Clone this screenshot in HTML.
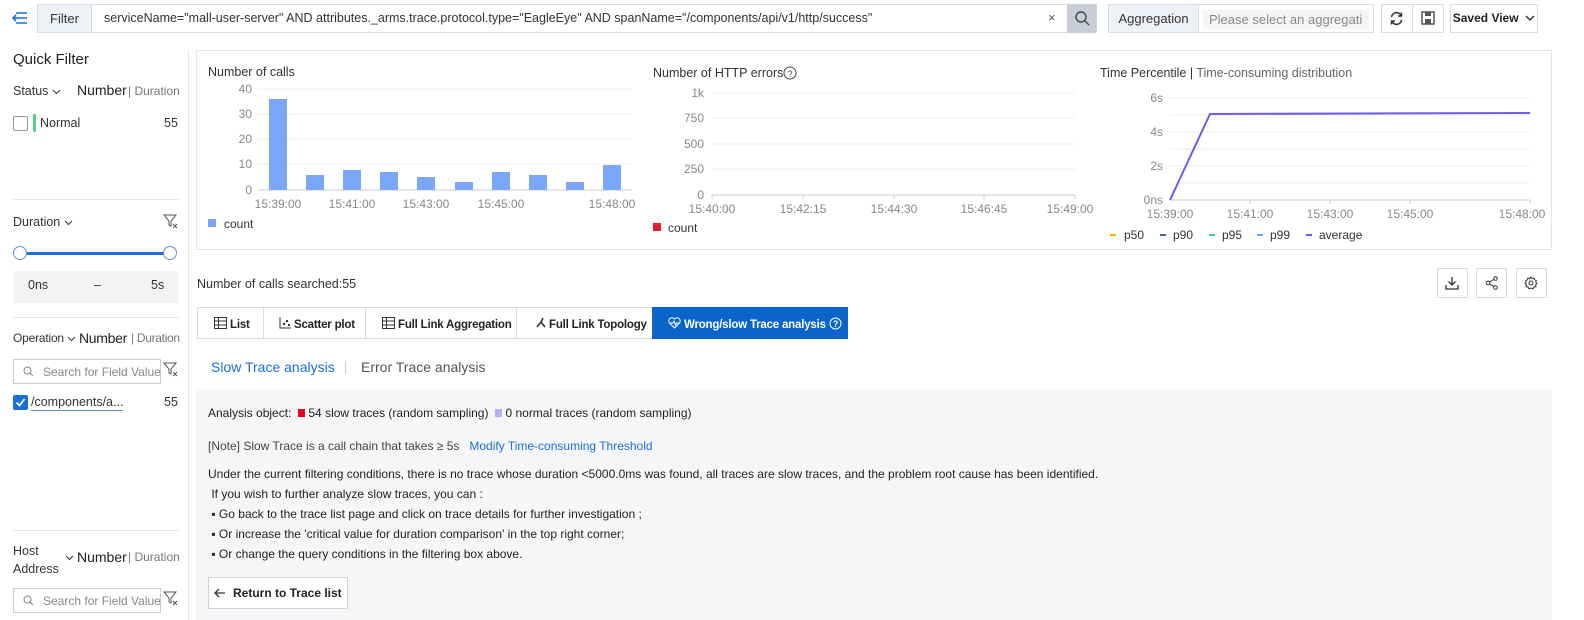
<!DOCTYPE html>
<html><head><meta charset="utf-8"><style>
*{box-sizing:border-box;margin:0;padding:0}
body{width:1584px;height:620px;overflow:hidden;background:#fff;font-family:"Liberation Sans",sans-serif;color:#333;font-size:12px;position:relative}
.a{position:absolute;white-space:nowrap}
.bx{position:absolute;border:1px solid #d9dde3;background:#fff}
.tb{font-size:11.5px;font-weight:bold;color:#222;letter-spacing:-0.2px}
</style></head><body>
<!-- top bar -->
<svg class="a" style="left:12px;top:11px" width="16" height="14" viewBox="0 0 16 14"><path d="M4 2H15M1 7H15M4 12H15M4 4L1 7L4 10" stroke="#1a6fd8" stroke-width="1.6" fill="none"/></svg>
<div class="bx" style="left:37px;top:4px;width:55px;height:29px;background:#eef1f6;text-align:center;line-height:27px;font-size:13px">Filter</div>
<div class="bx" style="left:91px;top:4px;width:977px;height:29px;line-height:27px;padding-left:12px;font-size:12.5px">serviceName="mall-user-server" AND attributes._arms.trace.protocol.type="EagleEye" AND spanName="/components/api/v1/http/success"</div>
<div class="a" style="left:1048px;top:10px;font-size:13px;color:#555">×</div>
<div class="a" style="left:1067px;top:4px;width:30px;height:29px;background:#c9ced6;border-radius:0 2px 2px 0"></div>
<svg class="a" style="left:1075px;top:11px" width="15" height="15"><circle cx="6" cy="6" r="5" stroke="#444" stroke-width="1.4" fill="none"/><path d="M10 10L14 14" stroke="#444" stroke-width="1.4"/></svg>
<div class="bx" style="left:1108px;top:4px;width:91px;height:29px;background:#eef1f6;text-align:center;line-height:27px;font-size:13px">Aggregation</div>
<div class="bx" style="left:1198px;top:4px;width:176px;height:29px;padding:5px 4px"><div style="background:#f4f5f7;height:19px;line-height:19px;padding-left:6px;color:#888;font-size:13px">Please select an aggregati</div></div>
<div class="bx" style="left:1381px;top:4px;width:63px;height:29px"></div>
<div class="a" style="left:1412px;top:4px;width:1px;height:29px;background:#d9dde3"></div>
<svg class="a" style="left:1389px;top:11px" width="15" height="15" viewBox="0 0 15 15"><path d="M2.5 6A5 5 0 0 1 12 4.5M12.5 9A5 5 0 0 1 3 10.5" stroke="#333" stroke-width="1.6" fill="none"/><path d="M12.5 1.5V5H9M2.5 13.5V10H6" stroke="#333" stroke-width="1.4" fill="none"/></svg>
<svg class="a" style="left:1421px;top:11px" width="14" height="14"><rect x="1" y="1" width="12" height="12" stroke="#555" stroke-width="1.5" fill="none"/><rect x="4" y="1" width="6" height="4" fill="#555"/><rect x="4" y="8" width="6" height="5" fill="#555"/></svg>
<div class="bx" style="left:1450px;top:4px;width:88px;height:29px;text-align:center;line-height:27px;font-size:12px;font-weight:bold;color:#222">Saved View &nbsp;<svg width="10" height="7"><path d="M1 1L5 5L9 1" stroke="#333" stroke-width="1.4" fill="none"/></svg></div>

<!-- sidebar -->
<div class="a" style="left:188px;top:50px;width:1px;height:570px;background:#e5e7eb"></div>
<div class="a" style="left:13px;top:51px;font-size:15px;color:#222">Quick Filter</div>
<div class="a" style="left:13px;top:84px;font-size:12.5px">Status <svg width="9" height="6"><path d="M1 1L4.5 4.5L8 1" stroke="#333" fill="none"/></svg></div>
<div class="a" style="left:77px;top:82px;font-size:14px;color:#222">Number</div>
<div class="a" style="left:128px;top:84px;font-size:12px;color:#777">| Duration</div>
<div class="a" style="left:13px;top:116px;width:15px;height:15px;border:1px solid #999;border-radius:2px"></div>
<div class="a" style="left:33px;top:114px;width:3px;height:18px;background:#4cd08a;border-radius:2px"></div>
<div class="a" style="left:40px;top:116px;font-size:12.5px">Normal</div>
<div class="a" style="left:164px;top:116px;font-size:12.5px">55</div>
<div class="a" style="left:13px;top:199px;width:166px;height:1px;background:#e3e5e8"></div>
<div class="a" style="left:13px;top:215px;font-size:12.5px">Duration <svg width="9" height="6"><path d="M1 1L4.5 4.5L8 1" stroke="#333" fill="none"/></svg></div>
<svg class="a" style="left:163px;top:213px" width="16" height="16"><path d="M1 2H13L8 8V13L6 12V8Z" stroke="#555" fill="none"/><path d="M10 11L14 15M14 11L10 15" stroke="#555"/></svg>
<div class="a" style="left:20px;top:252px;width:150px;height:3px;background:#1a6fd8"></div>
<div class="a" style="left:13px;top:246px;width:14px;height:14px;border:1.5px solid #6a8fc7;border-radius:50%;background:#fff"></div>
<div class="a" style="left:163px;top:246px;width:14px;height:14px;border:1.5px solid #6a8fc7;border-radius:50%;background:#fff"></div>
<div class="a" style="left:13px;top:271px;width:166px;height:32px;background:#f2f3f5"></div>
<div class="a" style="left:28px;top:278px;font-size:12.5px">0ns</div>
<div class="a" style="left:94px;top:278px;font-size:12.5px">–</div>
<div class="a" style="left:151px;top:278px;font-size:12.5px">5s</div>
<div class="a" style="left:13px;top:317px;width:166px;height:1px;background:#e3e5e8"></div>
<div class="a" style="left:13px;top:331px;font-size:12px;letter-spacing:-0.2px">Operation <svg width="9" height="6"><path d="M1 1L4.5 4.5L8 1" stroke="#333" fill="none"/></svg></div>
<div class="a" style="left:79px;top:330px;font-size:14px;color:#222;letter-spacing:-0.3px">Number</div>
<div class="a" style="left:131px;top:331px;font-size:12px;color:#777;letter-spacing:-0.3px">| Duration</div>
<div class="bx" style="left:13px;top:359px;width:148px;height:25px;border-color:#ccc"></div>
<svg class="a" style="left:23px;top:366px" width="11" height="11"><circle cx="4.5" cy="4.5" r="3.5" stroke="#888" fill="none"/><path d="M7 7L10 10" stroke="#888"/></svg>
<div class="a" style="left:43px;top:365px;font-size:12px;color:#888">Search for Field Value</div>
<svg class="a" style="left:163px;top:361px" width="16" height="16"><path d="M1 2H13L8 8V13L6 12V8Z" stroke="#555" fill="none"/><path d="M10 11L14 15M14 11L10 15" stroke="#555"/></svg>
<div class="a" style="left:13px;top:395px;width:15px;height:15px;background:#1a6fd8;border-radius:2px"></div>
<svg class="a" style="left:15px;top:397px" width="11" height="11"><path d="M1.5 5.5L4.5 8.5L9.5 2" stroke="#fff" stroke-width="1.8" fill="none"/></svg>
<div class="a" style="left:31px;top:395px;font-size:12.5px;border-bottom:1px solid #6a8fd8;padding-bottom:1px">/components/a...</div>
<div class="a" style="left:164px;top:395px;font-size:12.5px">55</div>
<div class="a" style="left:13px;top:530px;width:166px;height:1px;background:#e3e5e8"></div>
<div class="a" style="left:13px;top:542px;font-size:12.5px;line-height:18px">Host<br>Address</div>
<div class="a" style="left:65px;top:550px;font-size:12.5px"><svg width="9" height="6"><path d="M1 1L4.5 4.5L8 1" stroke="#333" fill="none"/></svg></div>
<div class="a" style="left:77px;top:549px;font-size:14px;color:#222">Number</div>
<div class="a" style="left:128px;top:550px;font-size:12px;color:#777">| Duration</div>
<div class="bx" style="left:13px;top:588px;width:148px;height:25px;border-color:#ccc"></div>
<svg class="a" style="left:23px;top:595px" width="11" height="11"><circle cx="4.5" cy="4.5" r="3.5" stroke="#888" fill="none"/><path d="M7 7L10 10" stroke="#888"/></svg>
<div class="a" style="left:43px;top:594px;font-size:12px;color:#888">Search for Field Value</div>
<svg class="a" style="left:163px;top:590px" width="16" height="16"><path d="M1 2H13L8 8V13L6 12V8Z" stroke="#555" fill="none"/><path d="M10 11L14 15M14 11L10 15" stroke="#555"/></svg>

<!-- charts -->
<div class="bx" style="left:196px;top:50px;width:1356px;height:200px;border-color:#e3e5e8"></div>
<svg class="a" style="left:0;top:0" width="1584" height="260" font-family="Liberation Sans" font-size="12">
<text x="208" y="76" fill="#333" font-size="12.5">Number of calls</text>
<g stroke="#eee"><line x1="258" y1="89" x2="632" y2="89"/><line x1="258" y1="114" x2="632" y2="114"/><line x1="258" y1="139" x2="632" y2="139"/><line x1="258" y1="164" x2="632" y2="164"/></g>
<line x1="258" y1="190" x2="632" y2="190" stroke="#ccc"/>
<g fill="#888" text-anchor="end"><text x="252" y="93">40</text><text x="252" y="118">30</text><text x="252" y="143">20</text><text x="252" y="168">10</text><text x="252" y="194">0</text></g>
<g fill="#7aa7f7"><rect x="269" y="99" width="18" height="91"/><rect x="306" y="175" width="18" height="15"/><rect x="343" y="170" width="18" height="20"/><rect x="380" y="172" width="18" height="18"/><rect x="417" y="177" width="18" height="13"/><rect x="455" y="182" width="18" height="8"/><rect x="492" y="172" width="18" height="18"/><rect x="529" y="175" width="18" height="15"/><rect x="566" y="182" width="18" height="8"/><rect x="603" y="165" width="18" height="25"/></g>
<g fill="#888" text-anchor="middle"><text x="278" y="208">15:39:00</text><text x="352" y="208">15:41:00</text><text x="426" y="208">15:43:00</text><text x="501" y="208">15:45:00</text><text x="612" y="208">15:48:00</text></g>
<rect x="208" y="219" width="8" height="8" fill="#7aa7f7"/><text x="224" y="228" fill="#333">count</text>

<text x="653" y="77" fill="#333" font-size="12.5">Number of HTTP errors</text>
<circle cx="790" cy="73" r="6" stroke="#444" fill="none"/><text x="790" y="77" font-size="9" fill="#444" text-anchor="middle">?</text>
<g stroke="#eee"><line x1="712" y1="93" x2="1075" y2="93"/><line x1="712" y1="118" x2="1075" y2="118"/><line x1="712" y1="144" x2="1075" y2="144"/><line x1="712" y1="169" x2="1075" y2="169"/></g>
<line x1="712" y1="195" x2="1075" y2="195" stroke="#ccc"/>
<g stroke="#ccc"><line x1="712" y1="195" x2="712" y2="199"/><line x1="803" y1="195" x2="803" y2="199"/><line x1="894" y1="195" x2="894" y2="199"/><line x1="984" y1="195" x2="984" y2="199"/><line x1="1075" y1="195" x2="1075" y2="199"/></g>
<g fill="#888" text-anchor="end"><text x="704" y="97">1k</text><text x="704" y="122">750</text><text x="704" y="148">500</text><text x="704" y="173">250</text><text x="704" y="199">0</text></g>
<g fill="#888" text-anchor="middle"><text x="712" y="213">15:40:00</text><text x="803" y="213">15:42:15</text><text x="894" y="213">15:44:30</text><text x="984" y="213">15:46:45</text><text x="1070" y="213">15:49:00</text></g>
<rect x="653" y="223" width="8" height="8" fill="#e8202a"/><text x="668" y="232" fill="#333">count</text>

<text x="1100" y="77" fill="#333" font-size="12.5">Time Percentile <tspan fill="#333">|</tspan> <tspan fill="#666">Time-consuming distribution</tspan></text>
<g stroke="#eee"><line x1="1170" y1="98" x2="1530" y2="98"/><line x1="1170" y1="115" x2="1530" y2="115"/><line x1="1170" y1="132" x2="1530" y2="132"/><line x1="1170" y1="149" x2="1530" y2="149"/><line x1="1170" y1="166" x2="1530" y2="166"/><line x1="1170" y1="183" x2="1530" y2="183"/></g>
<line x1="1170" y1="200" x2="1530" y2="200" stroke="#ccc"/>
<g stroke="#ccc"><line x1="1250" y1="200" x2="1250" y2="204"/><line x1="1330" y1="200" x2="1330" y2="204"/><line x1="1410" y1="200" x2="1410" y2="204"/><line x1="1530" y1="200" x2="1530" y2="204"/></g>
<g fill="#888" text-anchor="end"><text x="1163" y="102">6s</text><text x="1163" y="136">4s</text><text x="1163" y="170">2s</text><text x="1163" y="204">0ns</text></g>
<polyline points="1170,200 1210,114 1530,113" stroke="#6b5cf0" stroke-width="2" fill="none"/>
<g fill="#888" text-anchor="middle"><text x="1170" y="218">15:39:00</text><text x="1250" y="218">15:41:00</text><text x="1330" y="218">15:43:00</text><text x="1410" y="218">15:45:00</text><text x="1522" y="218">15:48:00</text></g>
<g stroke-width="2"><line x1="1110" y1="235" x2="1116" y2="235" stroke="#f5b400"/><line x1="1160" y1="235" x2="1166" y2="235" stroke="#4a6891"/><line x1="1209" y1="235" x2="1215" y2="235" stroke="#38d39f"/><line x1="1257" y1="235" x2="1263" y2="235" stroke="#6fa8f8"/><line x1="1306" y1="235" x2="1312" y2="235" stroke="#6b5cf0"/></g>
<g fill="#333"><text x="1124" y="239">p50</text><text x="1173" y="239">p90</text><text x="1222" y="239">p95</text><text x="1270" y="239">p99</text><text x="1319" y="239">average</text></g>
</svg>

<div class="a" style="left:197px;top:277px;font-size:12.5px">Number of calls searched:55</div>
<div class="bx" style="left:1437px;top:268px;width:31px;height:30px"></div>
<div class="bx" style="left:1476px;top:268px;width:31px;height:30px"></div>
<div class="bx" style="left:1516px;top:268px;width:31px;height:30px"></div>
<svg class="a" style="left:1445px;top:276px" width="14" height="14"><path d="M7 1V9M3.5 5.5L7 9L10.5 5.5M1 9V13H13V9" stroke="#333" stroke-width="1.3" fill="none"/></svg>
<svg class="a" style="left:1485px;top:276px" width="14" height="14"><circle cx="10.5" cy="2.5" r="1.8" stroke="#333" fill="none"/><circle cx="3" cy="7" r="1.8" stroke="#333" fill="none"/><circle cx="10.5" cy="11.5" r="1.8" stroke="#333" fill="none"/><path d="M4.6 6L9 3.4M4.6 8L9 10.6" stroke="#333"/></svg>
<svg class="a" style="left:1524px;top:276px" width="14" height="14"><circle cx="7" cy="7" r="2" stroke="#333" fill="none"/><path d="M7 1L8.2 2.6L10 2L10.5 3.8L12.3 4.5L11.8 6.3L13 7.5L11.6 8.8L12 10.8L10 11L9 12.8L7 12L5 12.8L4 11L2 10.8L2.4 8.8L1 7.5L2.2 6.3L1.7 4.5L3.5 3.8L4 2L5.8 2.6Z" stroke="#333" fill="none"/></svg>

<!-- tabs -->
<div class="bx" style="left:197px;top:307px;width:651px;height:32px;border-color:#d9dde3"></div>
<div class="a" style="left:263px;top:307px;width:1px;height:32px;background:#d9dde3"></div>
<div class="a" style="left:365px;top:307px;width:1px;height:32px;background:#d9dde3"></div>
<div class="a" style="left:516px;top:307px;width:1px;height:32px;background:#d9dde3"></div>
<div class="a" style="left:652px;top:307px;width:196px;height:32px;background:#0a64c9"></div>
<div class="a tb" style="left:214px;top:317px"><svg width="13" height="12" style="vertical-align:-1px"><rect x="0.5" y="0.5" width="12" height="11" stroke="#333" fill="none"/><path d="M0 4H13M0 8H13M4.5 0V12" stroke="#333"/></svg> List</div>
<div class="a tb" style="left:279px;top:317px"><svg width="12" height="12" style="vertical-align:-1px"><path d="M1 0V11H12" stroke="#333" fill="none"/><rect x="4" y="6" width="2" height="2" fill="#333"/><rect x="7" y="3" width="2" height="2" fill="#333"/><rect x="9" y="7" width="2" height="2" fill="#333"/></svg> Scatter plot</div>
<div class="a tb" style="left:382px;top:317px"><svg width="13" height="12" style="vertical-align:-1px"><rect x="0.5" y="0.5" width="12" height="11" stroke="#333" fill="none"/><path d="M0 4H13M0 8H13M4.5 0V12" stroke="#333"/></svg> Full Link Aggregation</div>
<div class="a tb" style="left:535px;top:317px"><svg width="11" height="12" style="vertical-align:-1px"><path d="M6 5L2 10M6 5L10 10M6 5L8 1" stroke="#333" stroke-width="1.6" fill="none"/></svg> Full Link Topology</div>
<div class="a tb" style="left:668px;top:317px;color:#fff"><svg width="13" height="12" style="vertical-align:-1px"><path d="M6.5 11L1.5 6A3 3 0 0 1 6.5 2A3 3 0 0 1 11.5 6Z M2 6H5L6 4L7.5 8L8.5 6H11" stroke="#fff" fill="none"/></svg> Wrong/slow Trace analysis <svg width="13" height="13" style="vertical-align:-2px"><circle cx="6.5" cy="6.5" r="5.5" stroke="#fff" fill="none"/><text x="6.5" y="10" font-size="9" fill="#fff" text-anchor="middle" font-family="Liberation Sans">?</text></svg></div>

<div class="a" style="left:211px;top:359px;font-size:14px;color:#1a6fd8">Slow Trace analysis</div>
<div class="a" style="left:345px;top:361px;width:1px;height:13px;background:#ccc"></div>
<div class="a" style="left:361px;top:359px;font-size:14px;color:#555">Error Trace analysis</div>

<div class="a" style="left:196px;top:390px;width:1356px;height:230px;background:#f5f6f8"></div>
<div class="a" style="left:208px;top:406px;font-size:12px;color:#222">Analysis object: &nbsp;<span style="display:inline-block;width:7px;height:8px;background:#e8001c"></span> 54 slow traces (random sampling) &nbsp;<span style="display:inline-block;width:7px;height:8px;background:#b5b0f5"></span> 0 normal traces (random sampling)</div>
<div class="a" style="left:208px;top:439px;font-size:12px;color:#444">[Note] Slow Trace is a call chain that takes ≥ 5s &nbsp; <span style="color:#1a6fd8">Modify Time-consuming Threshold</span></div>
<div class="a" style="left:208px;top:464px;font-size:12px;color:#222;line-height:20px">Under the current filtering conditions, there is no trace whose duration &lt;5000.0ms was found, all traces are slow traces, and the problem root cause has been identified.<br>&nbsp;If you wish to further analyze slow traces, you can :<br>&nbsp;▪ Go back to the trace list page and click on trace details for further investigation ;<br>&nbsp;▪ Or increase the 'critical value for duration comparison' in the top right corner;<br>&nbsp;▪ Or change the query conditions in the filtering box above.</div>
<div class="bx" style="left:208px;top:577px;width:140px;height:32px;border-color:#d0d4da;text-align:center;line-height:30px;font-size:12px;font-weight:bold;color:#222"><svg width="12" height="10" style="vertical-align:-1px"><path d="M11 5H1M5 1L1 5L5 9" stroke="#333" stroke-width="1.3" fill="none"/></svg>&nbsp; Return to Trace list</div>
</body></html>
